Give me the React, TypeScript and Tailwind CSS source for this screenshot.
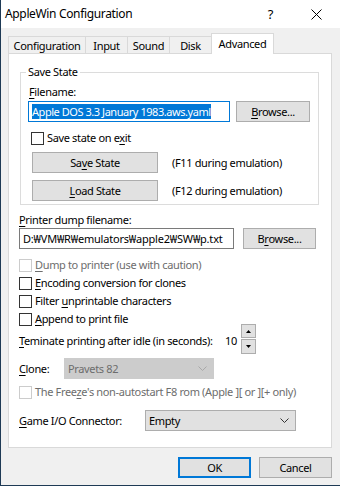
import type { ReactNode } from "react";

const FONT = "font-['Noto_Sans','Liberation_Sans',sans-serif]";

function Key({ children }: { children: ReactNode }) {
  return <span className="underline decoration-1 underline-offset-[2px]">{children}</span>;
}

function Button({ children, className = "" }: { children: ReactNode; className?: string }) {
  return (
    <div
      className={`flex h-[21px] items-center justify-center border border-[#adadad] bg-[#e1e1e1] text-black ${className}`}
    >
      {children}
    </div>
  );
}

function CheckRow({ label, disabled = false }: { label: ReactNode; disabled?: boolean }) {
  return (
    <div className="flex h-[18px] items-center">
      <div
        className={`h-[13px] w-[13px] shrink-0 border bg-white ${disabled ? "border-[#cccccc]" : "border-[#333333]"}`}
      />
      <span className={`ml-[3px] whitespace-nowrap leading-[16px] ${disabled ? "text-[#6d6d6d]" : "text-black"}`}>
        {label}
      </span>
    </div>
  );
}

function Chevron({ color }: { color: string }) {
  return (
    <svg width="9" height="6" viewBox="0 0 9 6">
      <polyline points="0.5,0.5 4.5,4.5 8.5,0.5" fill="none" stroke={color} strokeWidth="1" />
    </svg>
  );
}

export default function App() {
  return (
    <div
      className={`${FONT} h-[486px] w-[340px] overflow-hidden border-b border-l border-[#1e3a55] bg-[#f0f0f0] text-[11px] leading-[16px] tracking-[-0.35px] text-black`}
    >
      {/* title bar */}
      <div className="flex h-[28px] items-center bg-white">
        <span className="ml-[4px] text-[12px]">AppleWin Configuration</span>
        <span className="ml-auto mr-[38px] text-[13px]">?</span>
        <svg width="11" height="11" viewBox="0 0 11 11" className="mr-[18px]">
          <path d="M0.5 0.5 L10.5 10.5 M10.5 0.5 L0.5 10.5" stroke="#000" strokeWidth="1" />
        </svg>
      </div>

      {/* tabs */}
      <div className="ml-[7px] flex h-[25px] items-end">
        <div className="flex h-[17px] w-[77px] items-center justify-center border-l border-t border-[#d9d9d9] pt-[1px]">
          Configuration
        </div>
        <div className="flex h-[17px] w-[42px] items-center justify-center border-l border-t border-[#d9d9d9] pt-[1px]">
          Input
        </div>
        <div className="flex h-[17px] w-[42px] items-center justify-center border-l border-t border-[#d9d9d9] pt-[1px]">
          Sound
        </div>
        <div className="flex h-[17px] w-[42px] items-center justify-center border-l border-t border-[#d9d9d9] pt-[1px]">
          Disk
        </div>
        <div className="relative z-10 -mb-px flex h-[21px] w-[63px] items-center justify-center border-l border-r border-t border-[#d9d9d9] bg-white pb-[1px]">
          Advanced
        </div>
      </div>

      {/* panel */}
      <div className="ml-[7px] flex h-[395px] w-[324px] flex-col border border-[#d9d9d9] bg-white">
        {/* save state group */}
        <div className="relative ml-[11px] mt-[18px] flex h-[133px] w-[299px] flex-col border border-[#dcdcdc]">
          <span className="absolute left-[5px] top-[-9px] bg-white px-[2px]">Save State</span>
          <div className="ml-[8px] mt-[11px]">
            <Key>F</Key>ilename:
          </div>
          <div className="ml-[7px] mt-[1px] flex items-center">
            <div className="flex h-[21px] w-[202px] items-center overflow-hidden whitespace-nowrap border border-[#0078d7] bg-white pl-[3px]">
              <span className="bg-[#0078d7] leading-[15px] tracking-[-0.45px] text-white">
                Apple DOS 3.3 January 1983.aws.yaml
              </span>
            </div>
            <Button className="ml-[6px] w-[74px]">
              <Key>B</Key>rowse...
            </Button>
          </div>
          <div className="ml-[10px] mt-[7px]">
            <CheckRow
              label={
                <>
                  Save state on e<Key>x</Key>it
                </>
              }
            />
          </div>
          <div className="ml-[11px] mt-[5px] flex items-center">
            <Button className="w-[126px]">
              Sa<Key>v</Key>e State
            </Button>
            <span className="ml-[14px]">(F11 during emulation)</span>
          </div>
          <div className="ml-[11px] mt-[7px] flex items-center">
            <Button className="w-[126px]">
              <Key>L</Key>oad State
            </Button>
            <span className="ml-[14px]">(F12 during emulation)</span>
          </div>
        </div>

        {/* printer */}
        <div className="ml-[10px] mt-[7px]">
          <Key>P</Key>rinter dump filename:
        </div>
        <div className="ml-[10px] flex items-center">
          <div className="flex h-[21px] w-[215px] items-center overflow-hidden whitespace-nowrap border border-[#7a7a7a] bg-white pl-[3px] tracking-[-0.2px]">
            D:₩VM₩R₩emulators₩apple2₩SW₩p.txt
          </div>
          <Button className="ml-[9px] w-[73px]">
            B<Key>r</Key>owse...
          </Button>
        </div>

        <div className="ml-[10px] mt-[7px] flex flex-col">
          <CheckRow
            disabled
            label={
              <>
                <Key>D</Key>ump to printer (use with caution)
              </>
            }
          />
          <CheckRow
            label={
              <>
                <Key>E</Key>ncoding conversion for clones
              </>
            }
          />
          <CheckRow
            label={
              <>
                Filter <Key>u</Key>nprintable characters
              </>
            }
          />
          <CheckRow
            label={
              <>
                <Key>A</Key>ppend to print file
              </>
            }
          />
        </div>

        {/* idle timeout */}
        <div className="ml-[10px] mt-[-4px] flex items-center">
          <span className="w-[206px] whitespace-nowrap pt-[3px]">
            <Key>T</Key>eminate printing after idle (in seconds):
          </span>
          <span className="w-[16px] pt-[3px]">10</span>
          <div className="flex flex-col gap-[1px]">
            <div className="flex h-[14px] w-[15px] items-center justify-center border border-[#adadad] bg-[#e1e1e1]">
              <svg width="5" height="3" viewBox="0 0 5 3">
                <polygon points="2.5,0 5,3 0,3" fill="#000" />
              </svg>
            </div>
            <div className="flex h-[15px] w-[15px] items-center justify-center border border-[#adadad] bg-[#e1e1e1]">
              <svg width="5" height="3" viewBox="0 0 5 3">
                <polygon points="0,0 5,0 2.5,3" fill="#000" />
              </svg>
            </div>
          </div>
        </div>

        {/* clone */}
        <div className="ml-[10px] mt-[4px] flex items-center">
          <span className="w-[45px]">
            <Key>C</Key>lone:
          </span>
          <div className="flex h-[21px] w-[150px] items-center border border-[#cccccc] bg-[#cccccc] pl-[3px] pr-[6px] text-[#6d6d6d]">
            Pravets 82
            <span className="ml-auto">
              <Chevron color="#a8a8a8" />
            </span>
          </div>
        </div>

        <div className="ml-[10px] mt-[4px]">
          <CheckRow
            disabled
            label={
              <>
                The Free<Key>z</Key>e's non-autostart F8 rom (Apple ][ or ][+ only)
              </>
            }
          />
        </div>

        {/* game io */}
        <div className="ml-[10px] mt-[9px] flex items-center">
          <span className="w-[126px]">
            <Key>G</Key>ame I/O Connector:
          </span>
          <div className="flex h-[21px] w-[151px] items-center border border-[#adadad] bg-[#e1e1e1] pl-[3px] pr-[6px]">
            Empty
            <span className="ml-auto">
              <Chevron color="#333333" />
            </span>
          </div>
        </div>
      </div>

      {/* dialog buttons */}
      <div className="mr-[8px] mt-[9px] flex justify-end gap-[8px]">
        <div className="flex h-[21px] w-[73px] items-center justify-center border-2 border-[#0078d7] bg-[#e1e1e1]">
          OK
        </div>
        <Button className="w-[73px]">Cancel</Button>
      </div>
    </div>
  );
}
